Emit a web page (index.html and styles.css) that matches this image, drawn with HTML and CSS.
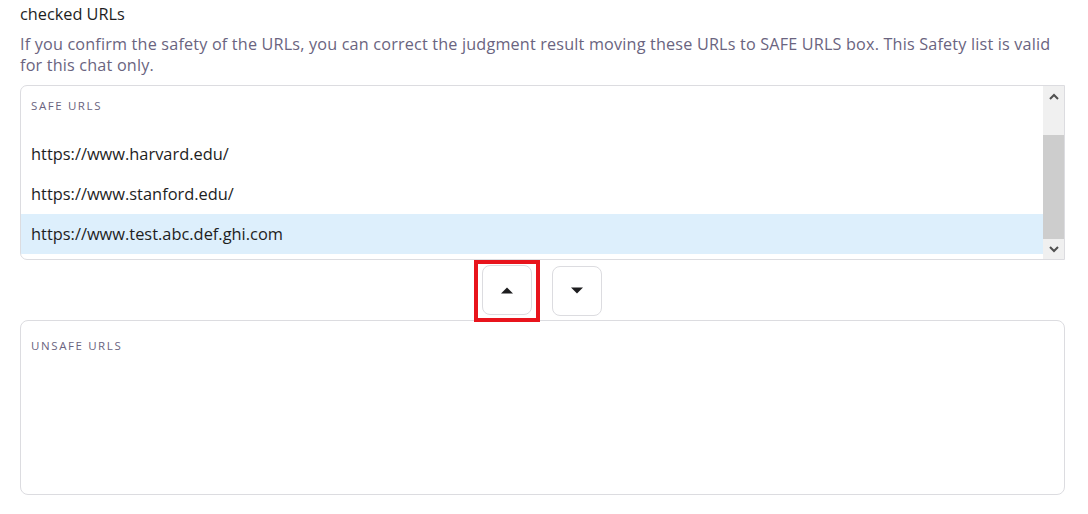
FILE: index.html
```html
<!DOCTYPE html>
<html>
<head>
<meta charset="utf-8">
<link rel="stylesheet" href="styles.css">
</head>
<body>
<div class="page">
  <div class="title">checked URLs</div>
  <div class="desc">If you confirm the safety of the URLs, you can correct the judgment result moving these URLs to SAFE URLS box. This Safety list is valid for this chat only.</div>
  <div class="box safe">
    <div class="content">
      <div class="label">SAFE URLS</div>
      <div class="list">
        <div class="item">https://www.harvard.edu/</div>
        <div class="item">https://www.stanford.edu/</div>
        <div class="item selected">https://www.test.abc.def.ghi.com</div>
      </div>
    </div>
    <div class="scrollbar">
      <div class="arrow"><svg width="10" height="7" viewBox="0 0 10 7"><path d="M1 6 L5 2 L9 6" fill="none" stroke="#505050" stroke-width="2"/></svg></div>
      <div class="track"><div class="thumb"></div></div>
      <div class="arrow"><svg width="10" height="7" viewBox="0 0 10 7"><path d="M1 1 L5 5 L9 1" fill="none" stroke="#505050" stroke-width="2"/></svg></div>
    </div>
  </div>
  <div class="controls">
    <div class="highlight">
      <button class="btn"><svg width="12" height="7" viewBox="0 0 12 7"><path d="M0 6.5 L6 0.5 L12 6.5 Z" fill="#1d1d1f"/></svg></button>
    </div>
    <button class="btn"><svg width="12" height="7" viewBox="0 0 12 7"><path d="M0 0.5 L6 6.5 L12 0.5 Z" fill="#1d1d1f"/></svg></button>
  </div>
  <div class="box unsafe">
    <div class="content">
      <div class="label">UNSAFE URLS</div>
    </div>
  </div>
</div>
</body>
</html>
```

FILE: styles.css
```css
* { box-sizing: border-box; }
html, body { margin: 0; padding: 0; background: #fff; }
body {
  font-family: "Open Sans", "Noto Sans", "Liberation Sans", sans-serif;
  color: #222;
}
.page {
  padding: 3px 23px 0 20px;
}
.title {
  font-size: 16.3px;
  line-height: 22px;
  color: #1e1e1e;
}
.desc {
  margin-top: 9px;
  font-size: 16.2px;
  line-height: 21px;
  color: #6a6480;
  letter-spacing: 0.18px;
}
.box {
  border: 1px solid #dcdce0;
  border-radius: 7px;
  display: flex;
  background: #fff;
}
.safe {
  margin-top: 9px;
  height: 175px;
  border-radius: 7px 0 0 7px;
  overflow: hidden;
}
.content {
  flex: 1;
  padding-top: 12px;
}
.label {
  padding-left: 10px;
  font-size: 11.5px;
  line-height: 16px;
  letter-spacing: 1.6px;
  color: #6a6480;
}
.list {
  margin-top: 20px;
}
.item {
  height: 40px;
  line-height: 40px;
  padding-left: 10px;
  font-size: 16.4px;
  color: #1e1e1e;
}
.item.selected { background: #ddeffc; }
.scrollbar {
  width: 21px;
  background: #f0f0f0;
  display: flex;
  flex-direction: column;
}
.arrow {
  height: 20px;
  display: flex;
  align-items: center;
  justify-content: center;
}
.track {
  flex: 1;
  display: flex;
  flex-direction: column;
  padding-top: 29px;
}
.thumb {
  flex: 1;
  background: #cdcdcd;
}
.controls {
  height: 61px;
  display: flex;
  justify-content: center;
  align-items: center;
  gap: 12px;
  padding-right: 9px;
}
.highlight {
  border: 4px solid #e8141c;
  padding: 1px 4px 3px 4px;
  margin-top: 1px;
  display: flex;
}
.btn {
  width: 50px;
  height: 50px;
  border: 1px solid #dcdce0;
  border-radius: 8px;
  background: #fff;
  display: flex;
  align-items: center;
  justify-content: center;
  padding: 0;
  margin: 0;
}
.unsafe {
  height: 175px;
  margin-top: -1px;
  border-radius: 8px;
}
.unsafe .content { padding-top: 17px; }
```
